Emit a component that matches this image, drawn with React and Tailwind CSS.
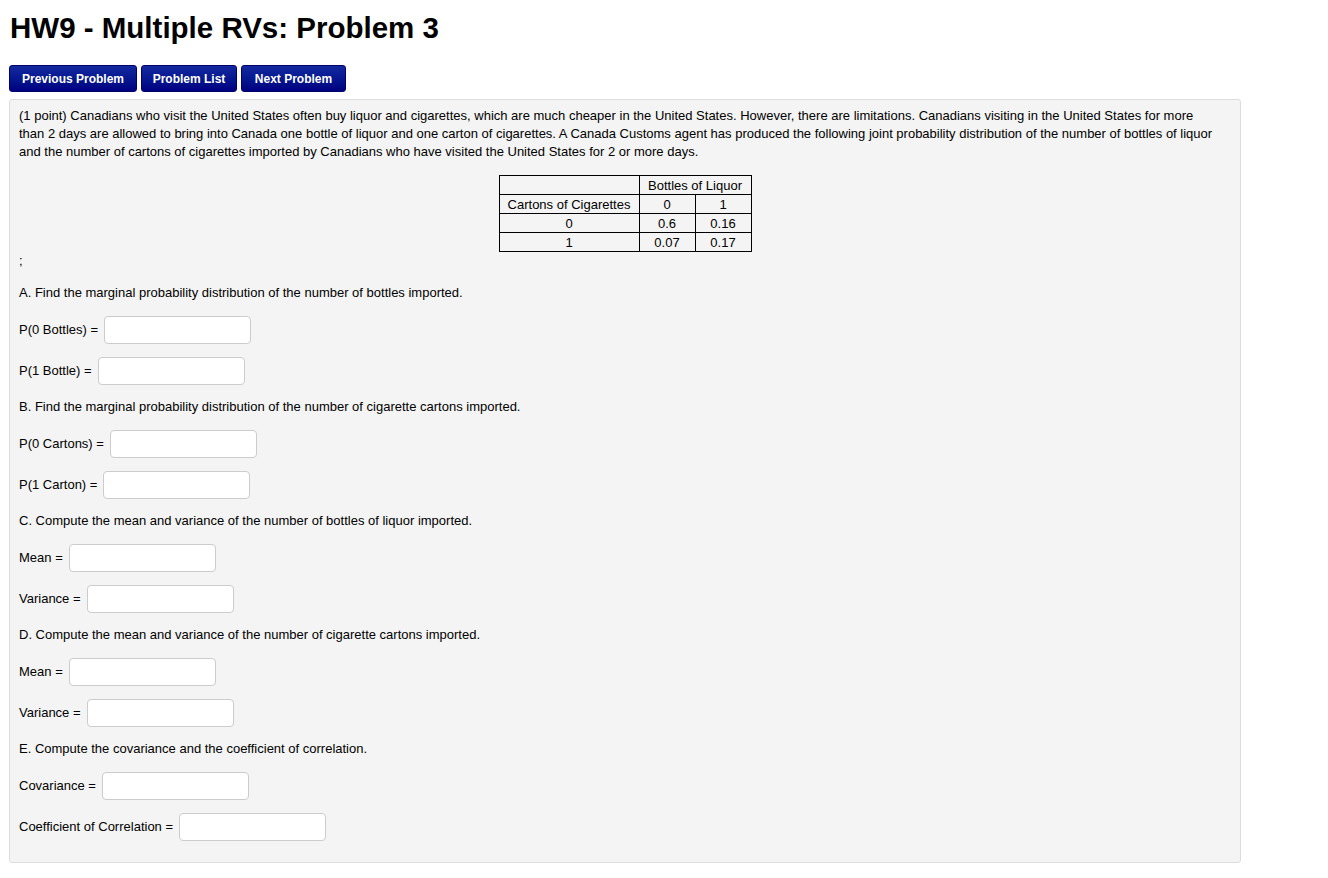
const Field = ({ label }) => (
  <div className="flex items-center h-[28px]">
    <span className="mr-[6px]">{label}</span>
    <input
      type="text"
      className="w-[147px] h-[28px] bg-white border border-[#cccccc] rounded-[4px] outline-none"
    />
  </div>
);

const Section = ({ title, fields }) => (
  <div className="mt-[14px]">
    <p className="leading-[18px]">{title}</p>
    <div className="flex flex-col gap-[13px] mt-[14px]">
      {fields.map((f) => (
        <Field key={f} label={f} />
      ))}
    </div>
  </div>
);

const sections = [
  {
    title: 'A. Find the marginal probability distribution of the number of bottles imported.',
    fields: ['P(0 Bottles) =', 'P(1 Bottle) ='],
  },
  {
    title: 'B. Find the marginal probability distribution of the number of cigarette cartons imported.',
    fields: ['P(0 Cartons) =', 'P(1 Carton) ='],
  },
  {
    title: 'C. Compute the mean and variance of the number of bottles of liquor imported.',
    fields: ['Mean =', 'Variance ='],
  },
  {
    title: 'D. Compute the mean and variance of the number of cigarette cartons imported.',
    fields: ['Mean =', 'Variance ='],
  },
  {
    title: 'E. Compute the covariance and the coefficient of correlation.',
    fields: ['Covariance =', 'Coefficient of Correlation ='],
  },
];

const btn =
  'h-[27px] rounded-[3px] text-white text-[12px] font-bold whitespace-nowrap text-center bg-gradient-to-b from-[#1428a0] to-[#000080] border border-[#00006a]';

export default function App() {
  return (
    <div className="min-h-[878px] bg-white text-black font-['Liberation_Sans',Arial,sans-serif]">
      <div className="pl-[9px] pt-[9px] w-[1241px]">
        <h1 className="text-[29.5px] font-bold leading-[38px] pl-[1px]">HW9 - Multiple RVs: Problem 3</h1>

        <div className="flex gap-[4px] mt-[18px]">
          <button className={`${btn} w-[128px]`}>Previous Problem</button>
          <button className={`${btn} w-[96px]`}>Problem List</button>
          <button className={`${btn} w-[105px]`}>Next Problem</button>
        </div>

        <div className="mt-[7px] bg-[#f4f4f4] border border-[#dddddd] rounded-[3px] pt-[7px] pb-[21px] px-[9px] text-[13px] leading-[18px]">
          <p>
            (1 point) Canadians who visit the United States often buy liquor and cigarettes, which are much cheaper in
            the United States. However, there are limitations. Canadians visiting in the United States for more
            <br />
            than 2 days are allowed to bring into Canada one bottle of liquor and one carton of cigarettes. A Canada
            Customs agent has produced the following joint probability distribution of the number of bottles of liquor
            <br />
            and the number of cartons of cigarettes imported by Canadians who have visited the United States for 2 or
            more days.
          </p>

          <div className="flex justify-center mt-[14px]">
            <table className="border border-black border-collapse text-center leading-[17px]">
              <tbody>
                <tr className="h-[19px]">
                  <td className="border border-black w-[140px]"></td>
                  <td className="border border-black" colSpan={2}>
                    Bottles of Liquor
                  </td>
                </tr>
                <tr className="h-[19px]">
                  <td className="border border-black">Cartons of Cigarettes</td>
                  <td className="border border-black w-[56px]">0</td>
                  <td className="border border-black w-[56px]">1</td>
                </tr>
                <tr className="h-[19px]">
                  <td className="border border-black">0</td>
                  <td className="border border-black">0.6</td>
                  <td className="border border-black">0.16</td>
                </tr>
                <tr className="h-[19px]">
                  <td className="border border-black">1</td>
                  <td className="border border-black">0.07</td>
                  <td className="border border-black">0.17</td>
                </tr>
              </tbody>
            </table>
          </div>

          <p>;</p>

          {sections.map((s, i) => (
            <div key={i} className={i === 0 ? '' : 'mt-[-1px]'}>
              <Section title={s.title} fields={s.fields} />
            </div>
          ))}
        </div>
      </div>
    </div>
  );
}
